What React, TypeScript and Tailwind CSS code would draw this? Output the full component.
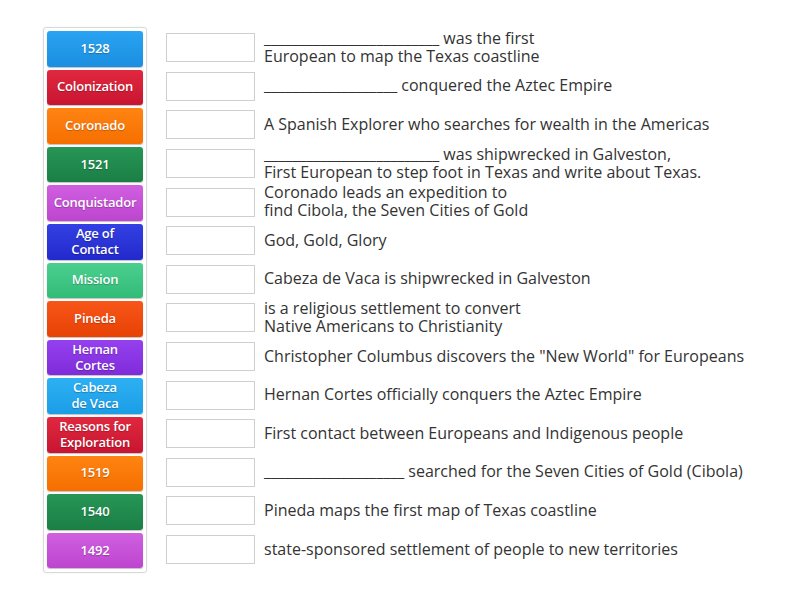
import React from "react";

const tiles: { label: string[]; cls: string }[] = [
  { label: ["1528"], cls: "bg-gradient-to-b from-[#2aa3f2] to-[#1a8ee0]" },
  { label: ["Colonization"], cls: "bg-gradient-to-b from-[#e0283f] to-[#c81431]" },
  { label: ["Coronado"], cls: "bg-gradient-to-b from-[#ff8412] to-[#f56f00]" },
  { label: ["1521"], cls: "bg-gradient-to-b from-[#269656] to-[#1b7f45]" },
  { label: ["Conquistador"], cls: "bg-gradient-to-b from-[#d05fe0] to-[#bd45cf]" },
  { label: ["Age of", "Contact"], cls: "bg-gradient-to-b from-[#3340e3] to-[#2329cc]" },
  { label: ["Mission"], cls: "bg-gradient-to-b from-[#4acf8f] to-[#33bb78]" },
  { label: ["Pineda"], cls: "bg-gradient-to-b from-[#f85518] to-[#e84205]" },
  { label: ["Hernan", "Cortes"], cls: "bg-gradient-to-b from-[#9540ee] to-[#7f2bdb]" },
  { label: ["Cabeza", "de Vaca"], cls: "bg-gradient-to-b from-[#2eb0f3] to-[#1a9ee6]" },
  { label: ["Reasons for", "Exploration"], cls: "bg-gradient-to-b from-[#e0283f] to-[#c81431]" },
  { label: ["1519"], cls: "bg-gradient-to-b from-[#ff8412] to-[#f56f00]" },
  { label: ["1540"], cls: "bg-gradient-to-b from-[#269656] to-[#1b7f45]" },
  { label: ["1492"], cls: "bg-gradient-to-b from-[#d05fe0] to-[#bd45cf]" },
];

const texts: string[][] = [
  ["_________________________ was the first", "European to map the Texas coastline"],
  ["___________________ conquered the Aztec Empire"],
  ["A Spanish Explorer who searches for wealth in the Americas"],
  ["_________________________ was shipwrecked in Galveston,", "First European to step foot in Texas and write about Texas."],
  ["Coronado leads an expedition to", "find Cibola, the Seven Cities of Gold"],
  ["God, Gold, Glory"],
  ["Cabeza de Vaca is shipwrecked in Galveston"],
  ["is a religious settlement to convert", "Native Americans to Christianity"],
  ["Christopher Columbus discovers the \"New World\" for Europeans"],
  ["Hernan Cortes officially conquers the Aztec Empire"],
  ["First contact between Europeans and Indigenous people"],
  ["____________________ searched for the Seven Cities of Gold (Cibola)"],
  ["Pineda maps the first map of Texas coastline"],
  ["state-sponsored settlement of people to new territories"],
];

export default function App() {
  return (
    <div
      className="w-[800px] h-[600px] bg-white flex pl-[43px] pt-[27px]"
      style={{ fontFamily: "'Open Sans', 'Noto Sans', sans-serif" }}
    >
      <div className="w-[104px] h-[546px] border border-[#d9d9d9] rounded-[3px] p-[3px] flex flex-col gap-[3px] shadow-[0_0_2px_rgba(0,0,0,0.08)]">
        {tiles.map((t, i) => (
          <div
            key={i}
            className={`h-[35.6px] shrink-0 rounded-[3px] flex flex-col items-center justify-center pb-[2px] text-white font-semibold text-[13px] leading-[16px] tracking-[-0.2px] shadow-[0_1px_1px_rgba(0,0,0,0.25)] ${t.cls}`}
            style={{ textShadow: "0 1px 1px rgba(0,0,0,0.25)" }}
          >
            {t.label.map((l, j) => (
              <span key={j}>{l}</span>
            ))}
          </div>
        ))}
      </div>
      <div className="ml-[19px] pt-[3px] flex flex-col gap-[3px]">
        {texts.map((lines, i) => (
          <div key={i} className="h-[35.6px] shrink-0 flex items-center">
            <div className="w-[89px] h-[29px] border border-[#cfcfcf] bg-white shrink-0" />
            <div className="ml-[9px] pb-[2px] text-[16px] leading-[18px] text-[#333] whitespace-nowrap">
              {lines.map((l, j) => (
                <div key={j}>{l}</div>
              ))}
            </div>
          </div>
        ))}
      </div>
    </div>
  );
}
